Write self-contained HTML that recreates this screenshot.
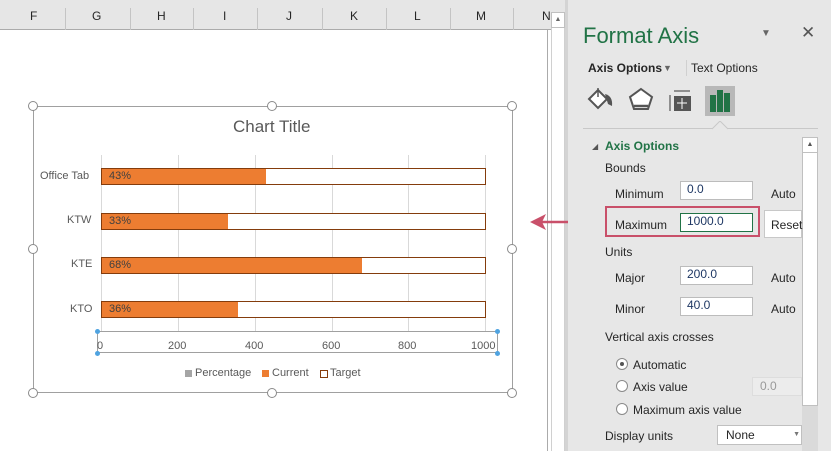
<!DOCTYPE html>
<html><head><meta charset="utf-8"><style>
*{margin:0;padding:0;box-sizing:border-box}
body{width:831px;height:451px;overflow:hidden;background:#fff;font-family:"Segoe UI","Liberation Sans",sans-serif;position:relative;color:#262626}
.a{position:absolute}
.t{position:absolute;font-size:12px;white-space:nowrap;line-height:14px}
.col{position:absolute;top:9px;font-size:12px;color:#262626}
.in{position:absolute;background:#fff;border:1px solid #bcbcbc;font-size:12px;padding-left:6px;line-height:15px;color:#1f3864}
.h{position:absolute;width:10px;height:10px;border:1.5px solid #8a8a8a;border-radius:50%;background:#fff}
.bar{position:absolute;left:101px;width:385px;height:17px;border:1.5px solid #843c0c;background:#fff}
.bar div{height:100%;background:#ed7d31;font-size:11px;color:#404040;padding-left:7px;line-height:15px}
.rad{position:absolute;width:12px;height:12px;border:1px solid #8a8a8a;border-radius:50%;background:#fff}
</style></head><body>
<div class="a" style="left:0;top:0;width:568px;height:30px;background:#e6e6e6;border-bottom:1px solid #ababab"></div>
<div class="a" style="left:65px;top:8px;width:1px;height:22px;background:#c4c4c4"></div>
<div class="a" style="left:130px;top:8px;width:1px;height:22px;background:#c4c4c4"></div>
<div class="a" style="left:193px;top:8px;width:1px;height:22px;background:#c4c4c4"></div>
<div class="a" style="left:257px;top:8px;width:1px;height:22px;background:#c4c4c4"></div>
<div class="a" style="left:322px;top:8px;width:1px;height:22px;background:#c4c4c4"></div>
<div class="a" style="left:386px;top:8px;width:1px;height:22px;background:#c4c4c4"></div>
<div class="a" style="left:450px;top:8px;width:1px;height:22px;background:#c4c4c4"></div>
<div class="a" style="left:513px;top:8px;width:1px;height:22px;background:#c4c4c4"></div>
<span class="col" style="left:30px">F</span><span class="col" style="left:92px">G</span><span class="col" style="left:157px">H</span><span class="col" style="left:223px">I</span><span class="col" style="left:286px">J</span><span class="col" style="left:350px">K</span><span class="col" style="left:414px">L</span><span class="col" style="left:476px">M</span><span class="col" style="left:542px">N</span>
<div class="a" style="left:547px;top:30px;width:1px;height:421px;background:#ababab"></div>
<div class="a" style="left:551px;top:12px;width:14px;height:439px;background:#fff;border-left:1px solid #d0d0d0;border-right:1px solid #d0d0d0"></div>
<div class="a" style="left:551px;top:12px;width:14px;height:16px;border:1px solid #c0c0c0;font-size:7px;text-align:center;color:#666;line-height:14px">▲</div>
<div class="a" style="left:565px;top:0;width:3px;height:451px;background:#d4d4d4"></div>

<div class="a" style="left:33px;top:106px;width:480px;height:287px;border:1.5px solid #a0a0a0"></div>
<div class="h" style="left:28px;top:101px"></div><div class="h" style="left:267px;top:101px"></div><div class="h" style="left:507px;top:101px"></div>
<div class="h" style="left:28px;top:244px"></div><div class="h" style="left:507px;top:244px"></div>
<div class="h" style="left:28px;top:388px"></div><div class="h" style="left:267px;top:388px"></div><div class="h" style="left:507px;top:388px"></div>
<div class="t" style="left:233px;top:117px;font-size:17px;line-height:20px;color:#595959">Chart Title</div>
<div class="a" style="left:101px;top:155px;width:1px;height:176px;background:#d9d9d9"></div>
<div class="a" style="left:178px;top:155px;width:1px;height:176px;background:#d9d9d9"></div>
<div class="a" style="left:255px;top:155px;width:1px;height:176px;background:#d9d9d9"></div>
<div class="a" style="left:332px;top:155px;width:1px;height:176px;background:#d9d9d9"></div>
<div class="a" style="left:408px;top:155px;width:1px;height:176px;background:#d9d9d9"></div>
<div class="a" style="left:485px;top:155px;width:1px;height:176px;background:#d9d9d9"></div>
<div class="t" style="left:40px;top:169px;font-size:11px;color:#595959">Office Tab</div>
<div class="t" style="left:67px;top:213px;font-size:11px;color:#595959">KTW</div>
<div class="t" style="left:71px;top:257px;font-size:11px;color:#595959">KTE</div>
<div class="t" style="left:70px;top:302px;font-size:11px;color:#595959">KTO</div>
<div class="bar" style="top:168px"><div style="width:164px">43%</div></div>
<div class="bar" style="top:213px"><div style="width:126px">33%</div></div>
<div class="bar" style="top:257px"><div style="width:260px">68%</div></div>
<div class="bar" style="top:301px"><div style="width:136px">36%</div></div>
<div class="a" style="left:97px;top:331px;width:401px;height:22px;border:1px solid #a0a0a0"></div>
<div class="a" style="left:95px;top:329px;width:5px;height:5px;border-radius:50%;background:#4fa3e0"></div>
<div class="a" style="left:495px;top:329px;width:5px;height:5px;border-radius:50%;background:#4fa3e0"></div>
<div class="a" style="left:95px;top:351px;width:5px;height:5px;border-radius:50%;background:#4fa3e0"></div>
<div class="a" style="left:495px;top:351px;width:5px;height:5px;border-radius:50%;background:#4fa3e0"></div>
<div class="t" style="left:97px;top:339px;font-size:11px;color:#595959">0</div>
<div class="t" style="left:168px;top:339px;font-size:11px;color:#595959">200</div>
<div class="t" style="left:245px;top:339px;font-size:11px;color:#595959">400</div>
<div class="t" style="left:322px;top:339px;font-size:11px;color:#595959">600</div>
<div class="t" style="left:398px;top:339px;font-size:11px;color:#595959">800</div>
<div class="t" style="left:471px;top:339px;font-size:11px;color:#595959">1000</div>
<div class="a" style="left:185px;top:370px;width:7px;height:7px;background:#a5a5a5"></div>
<div class="t" style="left:195px;top:366px;font-size:11px;color:#595959">Percentage</div>
<div class="a" style="left:262px;top:370px;width:7px;height:7px;background:#ed7d31"></div>
<div class="t" style="left:272px;top:366px;font-size:11px;color:#595959">Current</div>
<div class="a" style="left:320px;top:370px;width:8px;height:8px;border:1px solid #843c0c"></div>
<div class="t" style="left:330px;top:366px;font-size:11px;color:#595959">Target</div>

<svg class="a" style="left:528px;top:210px" width="56" height="24"><line x1="56" y1="12" x2="12" y2="12" stroke="#c9506a" stroke-width="2.5"/><path d="M2 12 L18 4 L14 12 L18 20 Z" fill="#c9506a"/></svg>

<div class="a" style="left:568px;top:0;width:263px;height:451px;background:#e7e7e7"></div>
<div class="t" style="left:583px;top:23px;font-size:22px;line-height:26px;color:#217346">Format Axis</div>
<div class="t" style="left:761px;top:27px;font-size:10px;color:#666">▼</div>
<div class="t" style="left:801px;top:23px;font-size:17px;line-height:20px;color:#555">✕</div>
<div class="t" style="left:588px;top:61px;font-weight:bold;font-size:12px">Axis Options</div>
<div class="t" style="left:663px;top:61px;font-size:9px;color:#666">▼</div>
<div class="a" style="left:686px;top:60px;width:1px;height:16px;background:#d0d0d0"></div>
<div class="t" style="left:691px;top:61px">Text Options</div>
<svg class="a" style="left:585px;top:86px" width="30" height="30"><path d="M4 13 L13 4 L22 13 L13 22 Z" fill="#fff" stroke="#555" stroke-width="2"/><path d="M20 8 Q28 10 27 20 L23 18 Z" fill="#555"/><line x1="13" y1="2" x2="13" y2="11" stroke="#555" stroke-width="1.5"/></svg>
<svg class="a" style="left:628px;top:87px" width="26" height="28"><path d="M13 2 L24 10 L20 22 L6 22 L2 10 Z" fill="#fff" stroke="#555" stroke-width="2"/><line x1="6" y1="19" x2="20" y2="19" stroke="#555" stroke-width="2.5"/></svg>
<svg class="a" style="left:668px;top:89px" width="24" height="24"><line x1="6" y1="2" x2="22" y2="2" stroke="#555" stroke-width="1.2"/><line x1="2" y1="6" x2="2" y2="22" stroke="#555" stroke-width="1.2"/><rect x="6" y="7" width="17" height="15" fill="#555"/><path d="M14 9v11M9 14h10" stroke="#fff" stroke-width="1"/></svg>
<div class="a" style="left:705px;top:86px;width:30px;height:30px;background:#b8b8b8"></div>
<div class="a" style="left:710px;top:95px;width:6px;height:17px;background:#217346"></div>
<div class="a" style="left:717px;top:90px;width:6px;height:22px;background:#217346"></div>
<div class="a" style="left:724px;top:93px;width:6px;height:19px;background:#217346"></div>
<div class="a" style="left:583px;top:128px;width:235px;height:1px;background:#c8c8c8"></div>
<svg class="a" style="left:712px;top:121px" width="18" height="9"><path d="M0 8 L8 0 L16 8" fill="#e7e7e7" stroke="#c8c8c8"/></svg>
<div class="a" style="left:802px;top:137px;width:16px;height:269px;background:#fff;border:1px solid #c0c0c0"></div>
<div class="a" style="left:802px;top:137px;width:16px;height:16px;border:1px solid #c0c0c0;font-size:7px;text-align:center;line-height:14px;color:#555">▲</div>
<div class="a" style="left:802px;top:406px;width:16px;height:45px;background:#dadada"></div>
<div class="t" style="left:592px;top:140px;font-size:8px;color:#555">◢</div>
<div class="t" style="left:605px;top:139px;font-weight:bold;color:#217346">Axis Options</div>
<div class="t" style="left:605px;top:161px">Bounds</div>
<div class="t" style="left:615px;top:187px">Minimum</div>
<div class="in" style="left:680px;top:181px;width:73px;height:19px">0.0</div>
<div class="t" style="left:771px;top:187px">Auto</div>
<div class="a" style="left:605px;top:206px;width:155px;height:31px;border:2px solid #c9506a"></div>
<div class="t" style="left:615px;top:218px">Maximum</div>
<div class="in" style="left:680px;top:213px;width:73px;height:19px;border-color:#217346">1000.0</div>
<div class="a" style="left:764px;top:210px;width:38px;height:28px;background:#fff;border:1px solid #c8c8c8"></div>
<div class="t" style="left:771px;top:218px">Reset</div>
<div class="t" style="left:605px;top:245px">Units</div>
<div class="t" style="left:615px;top:271px">Major</div>
<div class="in" style="left:680px;top:266px;width:73px;height:19px">200.0</div>
<div class="t" style="left:771px;top:271px">Auto</div>
<div class="t" style="left:615px;top:302px">Minor</div>
<div class="in" style="left:680px;top:297px;width:73px;height:19px">40.0</div>
<div class="t" style="left:771px;top:302px">Auto</div>
<div class="t" style="left:605px;top:330px">Vertical axis crosses</div>
<div class="rad" style="left:616px;top:358px"></div><div class="a" style="left:620px;top:362px;width:4px;height:4px;border-radius:50%;background:#555"></div>
<div class="t" style="left:633px;top:358px">Automatic</div>
<div class="rad" style="left:616px;top:380px"></div>
<div class="t" style="left:633px;top:380px">Axis value</div>
<div class="a" style="left:752px;top:377px;width:50px;height:19px;background:#ececec;border:1px solid #ddd;font-size:12px;color:#999;padding-left:7px;line-height:17px">0.0</div>
<div class="rad" style="left:616px;top:403px"></div>
<div class="t" style="left:633px;top:403px">Maximum axis value</div>
<div class="t" style="left:605px;top:429px">Display units</div>
<div class="a" style="left:717px;top:425px;width:85px;height:20px;background:#fff;border:1px solid #c0c0c0;font-size:12px;padding-left:8px;line-height:18px">None<span style="position:absolute;right:1px;top:0;font-size:7px;color:#777">▼</span></div>
</body></html>
